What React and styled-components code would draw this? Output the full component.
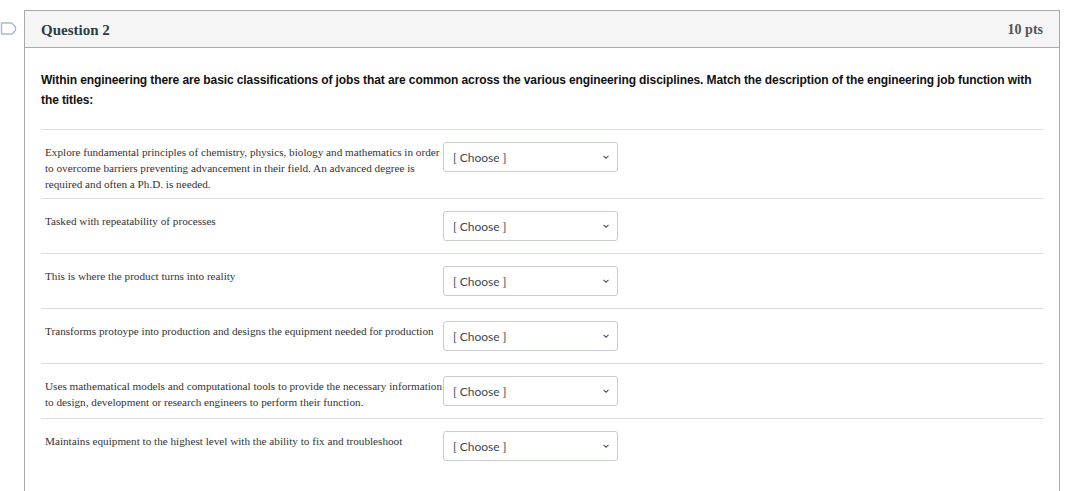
import React from "react";
import styled, { createGlobalStyle } from "styled-components";

const Global = createGlobalStyle`
  html, body { margin: 0; padding: 0; background: #fff; }
  body { font-family: "Liberation Serif", serif; }
  * { box-sizing: border-box; }
`;

const Page = styled.div`
  display: flex;
  align-items: flex-start;
  padding-top: 10px;
`;

const FlagCol = styled.div`
  width: 24px;
  flex: none;
  padding-top: 12px;
  display: flex;
`;

const Panel = styled.div`
  width: 1036px;
  border: 1px solid #a9a9a9;
  border-bottom: none;
  min-height: 490px;
`;

const Header = styled.div`
  height: 37px;
  background: #f5f5f5;
  border-bottom: 1px solid #a9a9a9;
  display: flex;
  align-items: center;
  justify-content: space-between;
  padding: 2px 16px 0;
`;

const Title = styled.span`
  font-family: "Liberation Serif", serif;
  font-weight: bold;
  font-size: 15px;
  color: #2d3b45;
`;

const Points = styled.span`
  font-family: "Liberation Serif", serif;
  font-weight: bold;
  font-size: 14px;
  color: #555;
`;

const Body = styled.div`
  padding: 22px 16px 0;
`;

const Prompt = styled.p`
  margin: 0 0 19px;
  font-family: "Liberation Sans", Arial, sans-serif;
  font-weight: bold;
  font-size: 12px;
  letter-spacing: -0.1px;
  line-height: 20px;
  color: #111;
`;

const Row = styled.div`
  display: grid;
  grid-template-columns: 398px 175px;
  align-items: start;
  border-top: 1px solid #dcdcdc;
  padding: 12px 4px 6px;
`;

const Desc = styled.div`
  margin-top: 2px;
  font-family: "Liberation Serif", serif;
  font-size: 11.2px;
  line-height: 16px;
  color: #333;
`;

const Select = styled.div`
  height: 30px;
  margin-bottom: 6px;
  border: 1px solid #c7cdd1;
  border-radius: 3px;
  background: #fff;
  display: flex;
  align-items: center;
  justify-content: space-between;
  padding: 0 7px 0 9px;
  font-family: Lato, "Noto Sans", sans-serif;
  font-size: 12px;
  color: #3d4850;
`;

const Flag = () => (
  <svg width="18" height="14" viewBox="0 0 18 14">
    <path
      d="M1.5 1 H11.5 L15.5 4.8 V8.5 L12 12 H1.5 Z"
      fill="none"
      stroke="#a8bccf"
      strokeWidth="1.4"
      strokeLinejoin="round"
    />
  </svg>
);

const Chevron = () => (
  <svg width="8" height="6" viewBox="0 0 8 6">
    <path d="M1.5 1.8 L4 4.2 L6.5 1.8" fill="none" stroke="#4a5560" strokeWidth="1.1" />
  </svg>
);

const items = [
  "Explore fundamental principles of chemistry, physics, biology and mathematics in order to overcome barriers preventing advancement in their field. An advanced degree is required and often a Ph.D. is needed.",
  "Tasked with repeatability of processes",
  "This is where the product turns into reality",
  "Transforms protoype into production and designs the equipment needed for production",
  "Uses mathematical models and computational tools to provide the necessary information to design, development or research engineers to perform their function.",
  "Maintains equipment to the highest level with the ability to fix and troubleshoot",
];

export default function App() {
  return (
    <>
      <Global />
      <Page>
        <FlagCol>
          <Flag />
        </FlagCol>
        <Panel>
          <Header>
            <Title>Question 2</Title>
            <Points>10 pts</Points>
          </Header>
          <Body>
            <Prompt>
              Within engineering there are basic classifications of jobs that are common across the various
              engineering disciplines. Match the description of the engineering job function with the titles:
            </Prompt>
            {items.map((t, i) => (
              <Row key={i}>
                <Desc>{t}</Desc>
                <Select>
                  <span>[ Choose ]</span>
                  <Chevron />
                </Select>
              </Row>
            ))}
          </Body>
        </Panel>
      </Page>
    </>
  );
}
